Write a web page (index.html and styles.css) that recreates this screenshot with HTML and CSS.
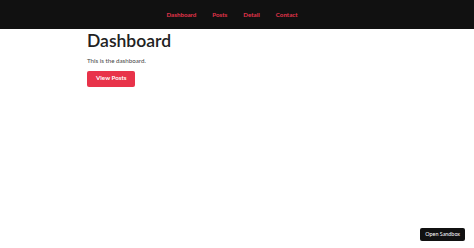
FILE: index.html
```html
<!DOCTYPE html>
<html>
<head>
<meta charset="utf-8">
<link rel="stylesheet" href="styles.css">
</head>
<body>
<header class="topbar">
  <nav class="nav">
    <a class="nav-link" href="#">Dashboard</a>
    <a class="nav-link" href="#">Posts</a>
    <a class="nav-link" href="#">Detail</a>
    <a class="nav-link" href="#">Contact</a>
  </nav>
</header>
<main class="content">
  <h1 class="title">Dashboard</h1>
  <p class="lead">This is the dashboard.</p>
  <a class="btn" href="#">View Posts</a>
</main>
<a class="sandbox" href="#">Open Sandbox</a>
</body>
</html>
```
FILE: styles.css
```css
html, body {
  margin: 0;
  padding: 0;
  background: #fff;
  font-family: Lato, "Liberation Sans", sans-serif;
}
.topbar {
  background: #111111;
  height: 29px;
  display: flex;
  justify-content: center;
  align-items: center;
}
.nav {
  display: flex;
  gap: 16px;
  margin-right: 10px;
}
.nav-link {
  color: #e2344b;
  text-decoration: none;
  font-size: 6.2px;
  line-height: 1.2;
  font-weight: 700;
}
.content {
  width: 300px;
  margin: 0 auto;
  display: flex;
  flex-direction: column;
  align-items: flex-start;
}
.title {
  margin: 1px 0 0;
  font-size: 17.5px;
  font-weight: 600;
  color: #222;
  line-height: 1.2;
}
.lead {
  margin: 5px 0 6px;
  font-size: 6.2px;
  font-weight: 400;
  color: #444;
  line-height: 1.5;
}
.btn {
  display: block;
  background: #e8334a;
  color: #fff;
  font-size: 6.2px;
  font-weight: 700;
  text-decoration: none;
  padding: 0 9px 3px;
  line-height: 13px;
  border-radius: 2px;
}
.sandbox {
  position: fixed;
  right: 9px;
  bottom: 7px;
  background: #111;
  color: #fff;
  font-size: 5.4px;
  text-decoration: none;
  padding: 0 5px;
  height: 13px;
  line-height: 13px;
  border-radius: 2px;
}
```
